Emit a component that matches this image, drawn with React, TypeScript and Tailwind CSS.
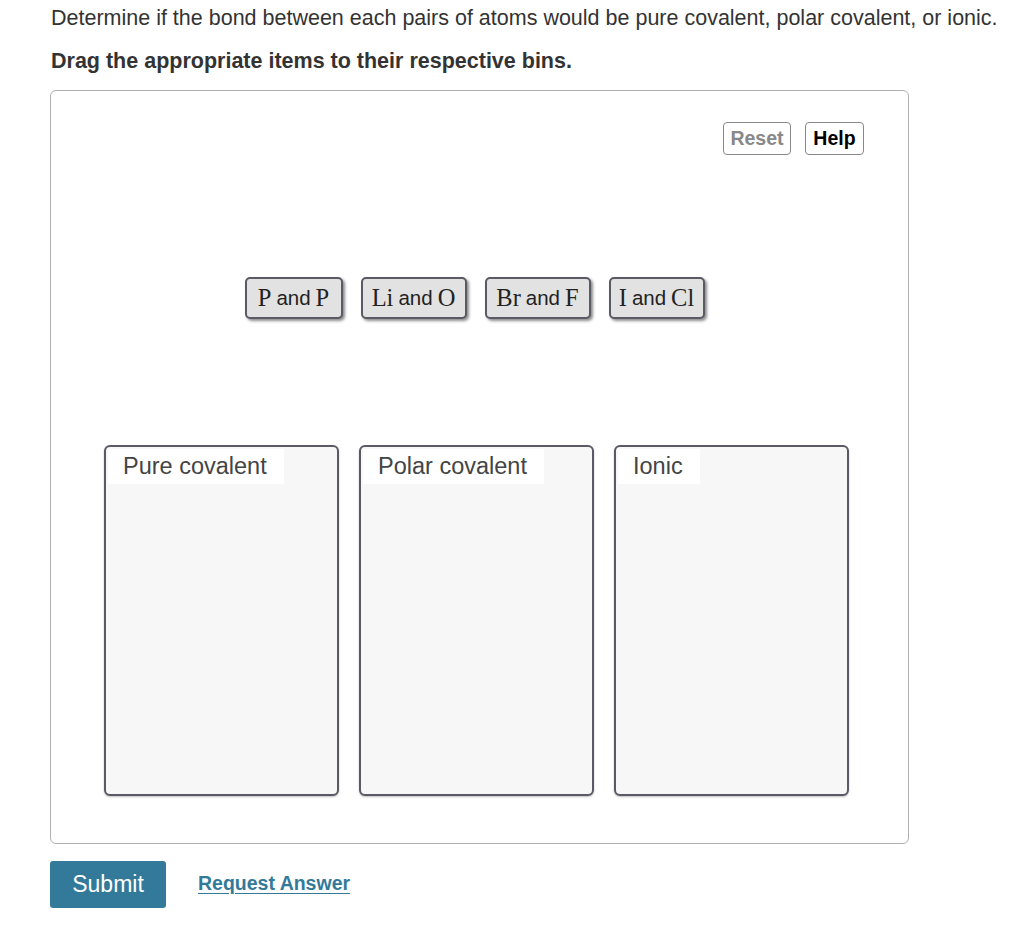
import React from "react";

const chips: { a: string; b: string; w: string }[] = [
  { a: "P", b: "P", w: "w-[98px]" },
  { a: "Li", b: "O", w: "w-[106px]" },
  { a: "Br", b: "F", w: "w-[106px]" },
  { a: "I", b: "Cl", w: "w-[96px]" },
];

const bins = ["Pure covalent", "Polar covalent", "Ionic"];

export default function App() {
  return (
    <div className="min-h-[926px] bg-white font-['Liberation_Sans',Arial,sans-serif] text-[#333]">
      <div className="pl-[51px] pt-[5px]">
        <p className="text-[21.5px] leading-[26px]">
          Determine if the bond between each pairs of atoms would be pure covalent, polar covalent, or ionic.
        </p>
        <p className="mt-[17px] text-[21.5px] font-bold leading-[26px]">
          Drag the appropriate items to their respective bins.
        </p>
      </div>
      <div className="ml-[50px] mt-[16px] h-[754px] w-[859px] rounded-[6px] border border-[#b0b0b0] pt-[31px]">
        <div className="flex justify-end gap-[14px] pr-[44px]">
          <button className="h-[33px] w-[68px] rounded-[4px] border border-[#888] bg-white text-[19.5px] font-bold text-[#888]">
            Reset
          </button>
          <button className="h-[33px] w-[59px] rounded-[4px] border border-[#888] bg-white text-[19.5px] font-bold text-black">
            Help
          </button>
        </div>
        <div className="mt-[122px] flex justify-center gap-[18px] pr-[10px]">
          {chips.map((c) => (
            <div
              key={c.a}
              className={`flex h-[42px] ${c.w} items-center justify-center rounded-[5px] border-2 border-[#5a5a64] bg-[#e2e2e2] text-[#222] shadow-[2px_2px_3px_rgba(0,0,0,0.45)]`}
            >
              <span className="font-['Liberation_Serif',serif] text-[24.5px]">{c.a}</span>
              <span className="mx-[5px] text-[20.5px]">and</span>
              <span className="font-['Liberation_Serif',serif] text-[24.5px]">{c.b}</span>
            </div>
          ))}
        </div>
        <div className="mt-[126px] flex justify-center gap-[20px] pr-[6px]">
          {bins.map((b) => (
            <div
              key={b}
              className="h-[351px] w-[235px] rounded-[6px] border-2 border-[#5a5a66] bg-[#f7f7f7] p-[2px] shadow-[0_1px_2px_rgba(0,0,0,0.25)]"
            >
              <div className="inline-block bg-white pl-[15px] pr-[17px] pt-[5px] pb-[6px] text-[23.5px] leading-[24px] text-[#444]">
                {b}
              </div>
            </div>
          ))}
        </div>
      </div>
      <div className="ml-[50px] mt-[17px] flex items-center">
        <button className="h-[47px] w-[116px] rounded-[3px] bg-[#337a9a] text-[23px] text-white">
          Submit
        </button>
        <a className="ml-[32px] -mt-[2px] text-[19.5px] font-bold text-[#337a9a] underline underline-offset-[3px]">
          Request Answer
        </a>
      </div>
    </div>
  );
}
